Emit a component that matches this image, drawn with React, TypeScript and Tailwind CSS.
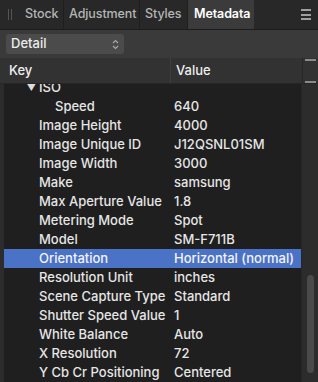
const rows: { k: string; v: string; indent?: number; group?: boolean; sel?: boolean }[] = [
  { k: "ISO", v: "", group: true },
  { k: "Speed", v: "640", indent: 1 },
  { k: "Image Height", v: "4000" },
  { k: "Image Unique ID", v: "J12QSNL01SM" },
  { k: "Image Width", v: "3000" },
  { k: "Make", v: "samsung" },
  { k: "Max Aperture Value", v: "1.8" },
  { k: "Metering Mode", v: "Spot" },
  { k: "Model", v: "SM-F711B" },
  { k: "Orientation", v: "Horizontal (normal)", sel: true },
  { k: "Resolution Unit", v: "inches" },
  { k: "Scene Capture Type", v: "Standard" },
  { k: "Shutter Speed Value", v: "1" },
  { k: "White Balance", v: "Auto" },
  { k: "X Resolution", v: "72" },
  { k: "Y Cb Cr Positioning", v: "Centered" },
];

export default function App() {
  return (
    <div
      className="w-[318px] h-[382px] overflow-hidden bg-[#2a2a2a] flex flex-col text-[13px] text-[#e6e6e6]"
      style={{ fontFamily: "Inter, 'Liberation Sans', sans-serif" }}
    >
      {/* tabs */}
      <div className="h-[30px] flex items-stretch bg-[#282828] border-b border-[#1c1c1c] text-[12.5px] tracking-[-0.1px]">
        <div className="w-[20px] shrink-0 flex items-center justify-center gap-[2px]">
          <div className="w-px h-[11px] bg-[#555]" />
          <div className="w-px h-[11px] bg-[#555]" />
        </div>
        <div className="w-[44px] shrink-0 pl-[5px] flex items-center font-medium text-[#b5b5b5] border-r border-[#1e1e1e]">Stock</div>
        <div className="w-[76px] shrink-0 pl-[5px] flex items-center font-medium text-[#b5b5b5] border-r border-[#1e1e1e] whitespace-nowrap">Adjustment</div>
        <div className="w-[48px] shrink-0 pl-[5px] flex items-center font-medium text-[#b5b5b5] border-r border-[#1e1e1e]">Styles</div>
        <div className="w-[66px] shrink-0 pl-[6px] flex items-center font-semibold text-white bg-[#3b3b3b]">Metadata</div>
        <div className="flex-1 flex items-center justify-end pr-[7px]">
          <div className="flex flex-col gap-[2.5px]">
            <div className="w-[10px] h-[2px] bg-[#a0a0a0]" />
            <div className="w-[10px] h-[2px] bg-[#a0a0a0]" />
            <div className="w-[10px] h-[2px] bg-[#a0a0a0]" />
          </div>
        </div>
      </div>
      {/* toolbar */}
      <div className="h-[28px] bg-[#3a3a3a] flex items-center px-[6px]">
        <div className="w-[118px] h-[20px] rounded-[3px] bg-[#4b4b4b] flex items-center justify-between pl-[5px] pr-[5px] text-[#ececec] font-medium">
          <span>Detail</span>
          <svg width="7" height="11" viewBox="0 0 7 11" fill="none" stroke="#aaa" strokeWidth="1.1">
            <path d="M1 4 L3.5 1.5 L6 4" />
            <path d="M1 7 L3.5 9.5 L6 7" />
          </svg>
        </div>
      </div>
      {/* header */}
      <div className="h-[26px] flex bg-[#323232] border-b border-[#262626]">
        <div className="w-[170px] flex items-center pl-[9px] font-medium text-[#eee]">Key</div>
        <div className="w-px bg-[#3e3e3e]" />
        <div className="w-[131px] flex items-center pl-[5px] font-medium text-[#eee]">Value</div>
        <div className="flex-1 border-l border-[#262626] flex flex-col justify-between">
          <div className="h-[2px] bg-[#8a8a8a] mx-[2px] mt-[1px]" />
          <div className="h-[2px] bg-[#8a8a8a] mx-[2px]" />
        </div>
      </div>
      {/* body */}
      <div className="flex-1 flex overflow-hidden">
        <div className="w-[4px] bg-[#2c2c2c]" />
        <div className="w-[297px] bg-[#1f1f1f] overflow-hidden">
          <div className="-mt-[6px]">
            {rows.map((r) => (
              <div
                key={r.k}
                className={`h-[19px] flex items-center font-medium ${r.sel ? "bg-[#4a72c6] text-[#f4f4f4]" : ""}`}
              >
                <div className="w-[166px] flex items-center">
                  {r.group ? (
                    <>
                      <span className="w-[35px] flex justify-end pr-[3px] text-[9px] text-[#ddd]">▼</span>
                      <span>{r.k}</span>
                    </>
                  ) : (
                    <span className={r.indent ? "pl-[51px]" : "pl-[35px]"}>{r.k}</span>
                  )}
                </div>
                <div className="pl-[4px]">{r.v}</div>
              </div>
            ))}
          </div>
        </div>
        <div className="flex-1 bg-[#2c2c2c] border-l border-[#262626] flex flex-col items-center pt-[191px]">
          <div className="w-[7px] h-[98px] rounded-full bg-[#4a4a4a]" />
        </div>
      </div>
    </div>
  );
}
